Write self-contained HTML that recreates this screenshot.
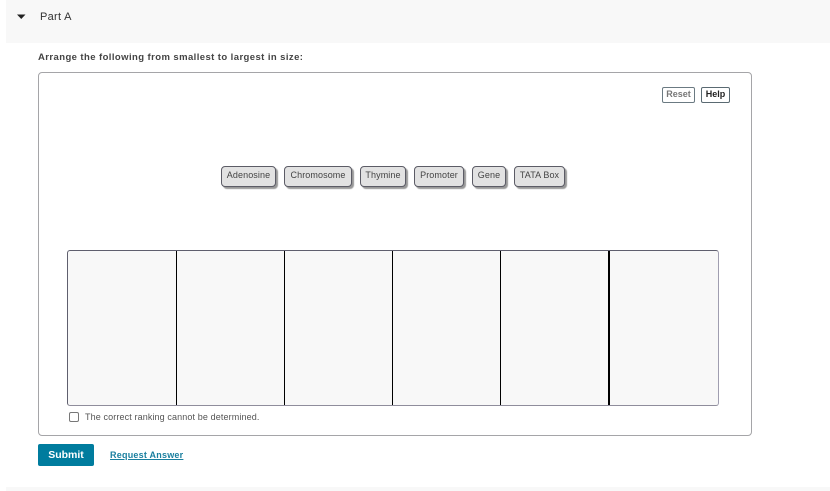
<!DOCTYPE html>
<html>
<head>
<meta charset="utf-8">
<style>
html,body{margin:0;padding:0;background:#fff;}
body{width:830px;height:491px;position:relative;overflow:hidden;font-family:"Liberation Sans",sans-serif;}
.a{position:absolute;box-sizing:border-box;white-space:nowrap;}
.item{position:absolute;box-sizing:border-box;top:166px;height:21px;background:#e2e2e2;border:1px solid #5c5c66;border-radius:4px;box-shadow:2px 2px 1px #999;font-size:9px;line-height:17px;color:#444;text-align:center;letter-spacing:.1px;}
.div{position:absolute;top:251px;height:154px;background:#000;width:1px;}
</style>
</head>
<body>
<div class="a" style="left:6px;top:0;width:824px;height:43px;background:#f8f8f8;"></div>
<svg class="a" style="left:17px;top:14px;" width="9" height="6" viewBox="0 0 9 6"><path d="M0 0.5H8.5L4.25 5Z" fill="#222"/></svg>
<div class="a" style="left:40px;top:11px;font-size:11px;line-height:13px;color:#333;letter-spacing:.3px;">Part A</div>
<div class="a" style="left:38px;top:51px;font-size:9.5px;line-height:13px;font-weight:bold;color:#444;letter-spacing:.42px;">Arrange the following from smallest to largest in size:</div>

<div class="a" style="left:38px;top:72px;width:714px;height:364px;border:1px solid #a5a5a8;border-radius:4px;background:#fff;"></div>

<div class="a" style="left:662px;top:87px;width:33px;height:16px;border:1px solid #6b7a82;border-radius:2px;font-size:9px;line-height:13px;text-align:center;color:#777;font-weight:bold;">Reset</div>
<div class="a" style="left:701px;top:87px;width:29px;height:16px;border:1px solid #5a6a72;border-radius:2px;font-size:9px;line-height:13px;text-align:center;color:#222;font-weight:bold;">Help</div>

<div class="item" style="left:221px;width:55px;">Adenosine</div>
<div class="item" style="left:284px;width:68px;">Chromosome</div>
<div class="item" style="left:360px;width:46px;">Thymine</div>
<div class="item" style="left:414px;width:50px;">Promoter</div>
<div class="item" style="left:472px;width:34px;">Gene</div>
<div class="item" style="left:514px;width:51px;">TATA Box</div>

<div class="a" style="left:67px;top:250px;width:652px;height:156px;border:1px solid #5f5f6e;border-bottom-color:#8f8d9c;border-right-color:#a09eb0;border-radius:3px;background:#f8f8f8;"></div>
<div class="div" style="left:176px;"></div>
<div class="div" style="left:284px;"></div>
<div class="div" style="left:392px;"></div>
<div class="div" style="left:500px;"></div>
<div class="div" style="left:608px;width:2px;"></div>

<div class="a" style="left:69px;top:412px;width:10px;height:10px;border:1px solid #777;border-radius:2px;background:#fff;"></div>
<div class="a" style="left:85px;top:411px;font-size:9px;line-height:12px;color:#555;letter-spacing:.12px;">The correct ranking cannot be determined.</div>

<div class="a" style="left:38px;top:444px;width:56px;height:22px;background:#007c9e;border-radius:2px;color:#fff;font-size:10.5px;font-weight:bold;line-height:22px;text-align:center;">Submit</div>
<div class="a" style="left:110px;top:449px;font-size:9px;line-height:12px;font-weight:bold;color:#1a7f9f;text-decoration:underline;letter-spacing:.23px;">Request Answer</div>

<div class="a" style="left:6px;top:487px;width:824px;height:4px;background:#f8f8f8;"></div>
</body>
</html>
